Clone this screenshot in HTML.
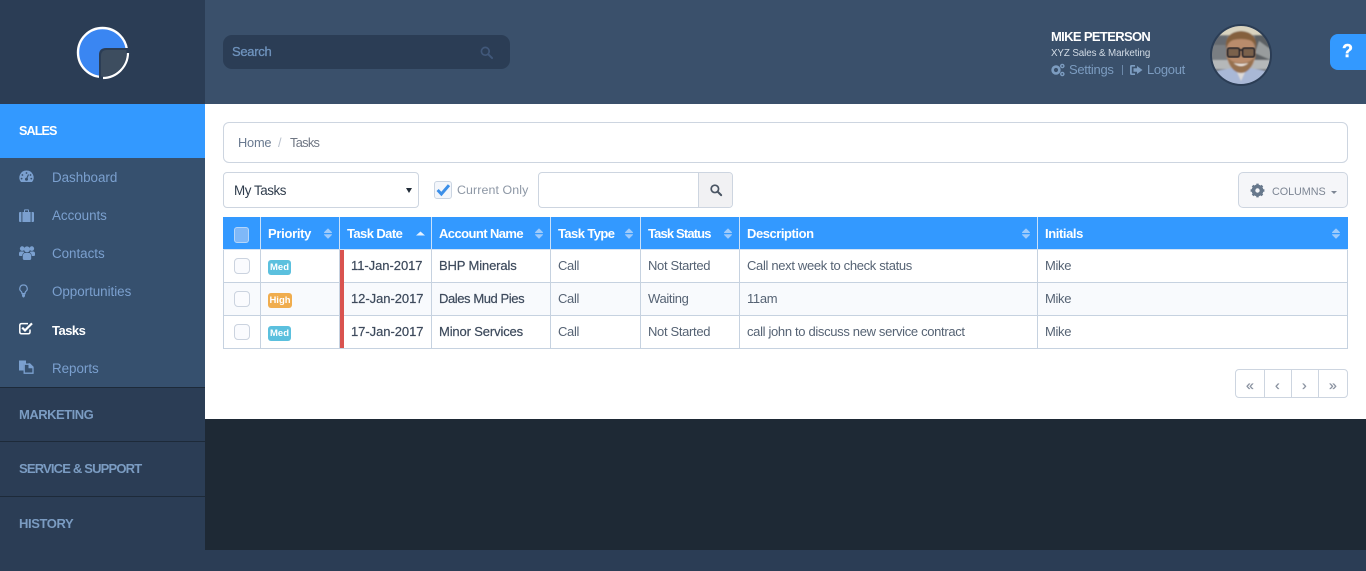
<!DOCTYPE html>
<html lang="en"><head><meta charset="utf-8"><title>Tasks</title>
<style>
*{box-sizing:border-box}
html,body{margin:0;padding:0;width:1366px;height:571px;overflow:hidden;background:#2b3d55;font-family:"Liberation Sans",sans-serif;font-size:13px;color:#4b5a6b}
.a{position:absolute}
.t{position:absolute;white-space:nowrap;line-height:16px;height:16px}
svg{position:absolute;overflow:visible}
.nav{color:#7ba0cf;font-size:13.4px;left:52px;letter-spacing:-.03px}
.sec{color:#7b9cc2;font-weight:bold;font-size:13px;left:19px;letter-spacing:-.5px}
.line{position:absolute;left:0;width:205px;height:1px;background:#1d2a39}
.th{color:#fff;font-weight:bold;font-size:13px;top:226px;letter-spacing:-.58px}
.td{font-size:13px;color:#566374;letter-spacing:-.33px}
.st{color:#3d4a5c;font-size:13px;letter-spacing:-.14px;-webkit-text-stroke:.2px #3d4a5c}
.v{position:absolute;width:1px;background:#c6d2e0;top:249px;height:99px}
.vh{position:absolute;width:1px;background:#c9e1fb;top:217px;height:32px}
.h{position:absolute;height:1px;background:#c6d2e0;left:223px;width:1125px}
.cb{position:absolute;left:234px;width:16px;height:16px;border:1px solid #cbd3df;border-radius:4px;background:#fafbfe}
.bd{position:absolute;left:268px;height:15px;border-radius:3px;color:#fff;font-size:9.5px;font-weight:bold;line-height:15px;text-align:center}
.pg{color:#8a92a0;font-size:14px;top:377px;-webkit-text-stroke:.3px #8a92a0}
</style></head><body>

<div class="a" style="left:205px;top:0;width:1161px;height:104px;background:#3a506b"></div>
<div class="a" style="left:0;top:0;width:205px;height:104px;background:#2b3d55"></div>
<svg style="left:0;top:0" width="205" height="104">
 <circle cx="102.500" cy="52.500" r="24.500" fill="#3a86f2" stroke="#fff" stroke-width="2.400"/>
 <clipPath id="lc"><circle cx="102.500" cy="52.500" r="24"/></clipPath>
 <path d="M99 79V55q0-7 7-7h24v31z" fill="#2b3d55"/>
 <path d="M101 78V56q0-6 6-6h22v28z" fill="#3d4d5f" clip-path="url(#lc)"/>
 <path d="M128 53A25.500 25.500 0 0 1 103 78" fill="none" stroke="#fff" stroke-width="2.200"/>
</svg>

<div class="a" style="left:223px;top:35px;width:287px;height:34px;border-radius:9px;background:#2b3d55"></div>
<div class="t" style="left:232px;top:44px;color:#6f93bd;font-size:13px;letter-spacing:-.3px;-webkit-text-stroke:.3px #6f93bd">Search</div>
<svg style="left:480px;top:46px" width="13" height="13" viewBox="0 0 14 14"><circle cx="5.700" cy="5.700" r="4.200" fill="none" stroke="#41587a" stroke-width="1.800"/><path d="M8.800 8.800L13 13" stroke="#41587a" stroke-width="2.100" stroke-linecap="round"/></svg>

<div class="t" style="left:1051px;top:29px;color:#fff;font-weight:bold;font-size:13px;letter-spacing:-.65px">MIKE PETERSON</div>
<div class="t" style="left:1051px;top:46px;color:#d3dce6;font-size:9.800px;letter-spacing:-.1px">XYZ Sales &amp; Marketing</div>
<svg style="left:1051px;top:63px" width="14" height="14" viewBox="0 0 14 14"><circle cx="5" cy="7" r="3.400" fill="none" stroke="#7c9cc0" stroke-width="2.600"/><circle cx="11.300" cy="3" r="1.600" fill="none" stroke="#7c9cc0" stroke-width="1.400"/><circle cx="11.300" cy="11" r="1.600" fill="none" stroke="#7c9cc0" stroke-width="1.400"/></svg>
<div class="t" style="left:1069px;top:62px;color:#7c9cc0;font-size:13px;letter-spacing:-.3px">Settings</div>
<div class="a" style="left:1122px;top:65px;width:1px;height:10px;background:#6b88a9"></div>
<svg style="left:1130px;top:64px" width="13" height="12" viewBox="0 0 13 12" fill="#7c9cc0"><path d="M0 2.500Q0 1 1.500 1H5V2.600H1.800V9.400H5V11H1.500Q0 11 0 9.500z"/><path d="M7 2L12.500 6 7 10V7.700H3.500V4.300H7z"/></svg>
<div class="t" style="left:1147px;top:62px;color:#7c9cc0;font-size:13px;letter-spacing:-.3px">Logout</div>

<svg style="left:1209px;top:23px" width="64" height="64" viewBox="0 0 64 64">
 <defs><clipPath id="av"><circle cx="32" cy="32" r="29"/></clipPath><filter id="bl"><feGaussianBlur stdDeviation=".9"/></filter><filter id="bl2"><feGaussianBlur stdDeviation=".4"/></filter></defs>
 <circle cx="32" cy="32" r="31" fill="#2b3d55"/>
 <g clip-path="url(#av)"><g filter="url(#bl)">
  <rect width="64" height="64" fill="#7a7e82"/>
  <rect width="64" height="12" fill="#d9d3bf"/>
  <rect x="46" y="12" width="18" height="25" fill="#5b6064"/>
  <rect x="0" y="13" width="18" height="9" fill="#666b6f"/>
  <rect x="0" y="37" width="64" height="9" fill="#b5b8b9"/>
  <path d="M46 30L64 38V28L50 18z" fill="#989c9d"/>
  <path d="M2 64V50Q14 46 24 45H40Q50 46 62 50V64z" fill="#a9b8d6"/>
  <path d="M27 47L32 58 37 47z" fill="#dcd9d8"/>
  <ellipse cx="32" cy="30" rx="14.500" ry="19.500" fill="#b98c6c"/>
  <path d="M17 26Q15 9 32 8 49 9 47 26 45 18 40 17 32 15 24 17 19 19 17 26z" fill="#84613e"/>
  <path d="M18 33Q22 50 32 50 42 50 46 33 42 40 32 40 22 40 18 33z" fill="#96714f"/>
  <path d="M24.500 40Q32 46 39.500 40 32 42 24.500 40z" fill="#f3ece6"/>
 </g>
  <g fill="#2f2a28" fill-opacity=".45" stroke="#232327" stroke-width="1.500" filter="url(#bl2)"><rect x="18.500" y="25" width="12" height="9" rx="2"/><rect x="33.500" y="25" width="12" height="9" rx="2"/><path d="M30.500 27h3"/></g>
 </g>
</svg>

<div class="a" style="left:1330px;top:34px;width:36px;height:36px;background:#3399ff;border-radius:8px 0 0 8px"></div>
<div class="t" style="left:1342px;top:41px;color:#fff;font-weight:bold;font-size:18px;line-height:20px;height:20px;-webkit-text-stroke:.4px #fff">?</div>

<!-- sidebar -->
<div class="a" style="left:0;top:104px;width:205px;height:54px;background:#3399ff"></div>
<div class="t" style="left:19px;top:123px;color:#fff;font-weight:bold;font-size:12.600px;letter-spacing:-.9px">SALES</div>
<div class="a" style="left:0;top:158px;width:205px;height:229px;background:#36506e"></div>

<svg style="left:19px;top:170px" width="15" height="13" viewBox="0 0 15 13"><path d="M7.500 .5A7 7 0 0 0 2 12H13A7 7 0 0 0 7.500 .5z" fill="#7ba0cf"/><g fill="#36506e"><circle cx="7.500" cy="3" r=".9"/><circle cx="3.400" cy="5" r=".9"/><circle cx="2.600" cy="8.600" r=".9"/><circle cx="12.300" cy="8.600" r=".9"/><circle cx="11.500" cy="5" r=".9"/><circle cx="7.500" cy="9.200" r="1.500"/></g><path d="M7.500 9L9.500 4.500" stroke="#36506e" stroke-width="1.100"/></svg>
<div class="t nav" style="top:170px">Dashboard</div>

<svg style="left:19px;top:209px" width="15" height="13" viewBox="0 0 15 13" fill="#7ba0cf"><path d="M5 3V1.200Q5 .4 5.800 .4H9.200Q10 .4 10 1.200V3H9V1.400H6V3z"/><path d="M0 4Q0 3 1 3H2.400V13H1Q0 13 0 12zM3.400 3H11.600V13H3.400zM12.600 3H14Q15 3 15 4V12Q15 13 14 13H12.600z"/></svg>
<div class="t nav" style="top:208px">Accounts</div>

<svg style="left:19px;top:246px" width="16" height="14" viewBox="0 0 16 14" fill="#7ba0cf"><circle cx="3.200" cy="2.600" r="2.300"/><circle cx="12.800" cy="2.600" r="2.300"/><circle cx="8" cy="3.400" r="3"/><path d="M0 7.500Q0 5.500 2 5.500H4Q5 5.500 5.200 6.400 3.400 7.400 3.200 10H1Q0 10 0 9zM16 7.500Q16 5.500 14 5.500H12Q11 5.500 10.800 6.400 12.600 7.400 12.800 10H15Q16 10 16 9zM3.800 11Q3.800 7 6 7H10Q12.200 7 12.200 11V12.500Q12.200 14 10.600 14H5.400Q3.800 14 3.800 12.500z"/></svg>
<div class="t nav" style="top:246px">Contacts</div>

<svg style="left:19px;top:284px" width="9" height="14" viewBox="0 0 9 14"><path d="M4.500 1A3.600 3.600 0 0 0 2.400 7.600Q3 8.400 3 9.600H6Q6 8.400 6.600 7.600A3.600 3.600 0 0 0 4.500 1z" fill="none" stroke="#7ba0cf" stroke-width="1.200"/><path d="M3 10.300H6V12Q5.400 13.600 4.500 13.600 3.600 13.600 3 12z" fill="#7ba0cf"/></svg>
<div class="t nav" style="top:284px">Opportunities</div>

<svg style="left:19px;top:322px" width="14" height="13" viewBox="0 0 14 13"><path d="M11 7.500V10Q11 11.800 9.200 11.800H2.600Q.8 11.800 .8 10V3.400Q.8 1.600 2.600 1.600H9" fill="none" stroke="#fff" stroke-width="1.500"/><path d="M3.200 5.600L6 8.400 13 1.400" fill="none" stroke="#fff" stroke-width="2.200"/></svg>
<div class="t nav" style="top:323px;color:#fff;font-weight:bold;letter-spacing:-.5px;font-size:13px">Tasks</div>

<svg style="left:19px;top:360px" width="15" height="14" viewBox="0 0 15 14"><path d="M0 .5H7V3.500H4.500V10.500H0z" fill="#7ba0cf"/><path d="M5.200 4.200H10L14 8V13.200H5.200z" fill="#36506e" stroke="#7ba0cf" stroke-width="1.300"/><path d="M9.500 3.200H11L14.600 6.800V8.300H9.500z" fill="#7ba0cf"/></svg>
<div class="t nav" style="top:361px">Reports</div>

<div class="line" style="top:387px"></div>
<div class="t sec" style="top:407px">MARKETING</div>
<div class="line" style="top:441px"></div>
<div class="t sec" style="top:461px;letter-spacing:-.82px">SERVICE &amp; SUPPORT</div>
<div class="line" style="top:496px"></div>
<div class="t sec" style="top:516px;letter-spacing:-.4px">HISTORY</div>

<!-- content -->
<div class="a" style="left:205px;top:104px;width:1161px;height:315px;background:#fff"></div>
<div class="a" style="left:205px;top:419px;width:1161px;height:131px;background:#1e2935"></div>

<div class="a" style="left:223px;top:122px;width:1125px;height:41px;border:1px solid #cdd5e0;border-radius:6px;background:#fff"></div>
<div class="t" style="left:238px;top:135px;color:#6a7a90;font-size:12.800px;letter-spacing:-.2px">Home</div>
<div class="t" style="left:278px;top:135px;color:#b8c0cc;font-size:12.800px">/</div>
<div class="t" style="left:290px;top:135px;color:#6f7683;font-size:12.800px;letter-spacing:-.7px">Tasks</div>

<div class="a" style="left:223px;top:172px;width:196px;height:36px;border:1px solid #cdd5e0;border-radius:4px;background:#fff"></div>
<div class="t" style="left:234px;top:183px;color:#2f3c4c;font-size:13.400px;letter-spacing:-.45px">My Tasks</div>
<svg style="left:406px;top:188px" width="6" height="5"><path d="M0 0H6L3 5z" fill="#222c38"/></svg>

<div class="a" style="left:434px;top:181px;width:18px;height:18px;border:1px solid #cbd5e2;border-radius:3px;background:#f3f6fb"></div>
<svg style="left:436px;top:183px" width="15" height="14" viewBox="0 0 15 14"><path d="M1.600 7L5.400 11 13 2.200" fill="none" stroke="#3c8fe8" stroke-width="3"/></svg>
<div class="t" style="left:457px;top:182px;color:#8d97a5;font-size:12.400px;letter-spacing:.1px">Current Only</div>

<div class="a" style="left:538px;top:172px;width:195px;height:36px;border:1px solid #cdd5e0;border-radius:4px;background:#fff;overflow:hidden"><div class="a" style="left:159px;top:0;width:35px;height:34px;background:#f1f1f3;border-left:1px solid #cdd5e0"></div></div>
<svg style="left:710px;top:184px" width="12" height="12" viewBox="0 0 14 14"><circle cx="5.700" cy="5.700" r="4.300" fill="none" stroke="#4a5563" stroke-width="2"/><path d="M8.900 8.900L13 13" stroke="#4a5563" stroke-width="2.400" stroke-linecap="round"/></svg>

<div class="a" style="left:1238px;top:172px;width:110px;height:36px;border:1px solid #cdd5e0;border-radius:5px;background:#f5f6f9"></div>
<svg style="left:1250px;top:183px" width="15" height="15" viewBox="0 0 15 15"><circle cx="7.500" cy="7.500" r="4.400" fill="none" stroke="#67788c" stroke-width="3"/><path d="M7.500 .6V14.400M.6 7.500H14.400M2.600 2.600L12.400 12.400M12.400 2.600L2.600 12.400" stroke="#67788c" stroke-width="2.400"/><circle cx="7.500" cy="7.500" r="2.200" fill="#f5f6f9"/></svg>
<div class="t" style="left:1272px;top:184px;color:#7d8694;font-size:10.800px;letter-spacing:-.05px">COLUMNS</div>
<svg style="left:1331px;top:191px" width="6" height="3"><path d="M0 0H6L3 3z" fill="#7d8694"/></svg>

<!-- table -->
<div class="a" style="left:223px;top:217px;width:1125px;height:32px;background:#3399ff"></div>
<div class="a" style="left:223px;top:282px;width:1125px;height:33px;background:#f8fafd"></div>
<div class="a" style="left:223px;top:249px;width:1px;height:99px;background:#c6d2e0"></div>
<div class="a" style="left:1347px;top:249px;width:1px;height:99px;background:#c6d2e0"></div>
<div class="h" style="top:249px;background:#d5e4f5"></div>
<div class="h" style="top:282px"></div>
<div class="h" style="top:315px"></div>
<div class="h" style="top:348px"></div>

<div class="vh" style="left:260px"></div><div class="vh" style="left:339px"></div><div class="vh" style="left:431px"></div><div class="vh" style="left:550px"></div><div class="vh" style="left:640px"></div><div class="vh" style="left:739px"></div><div class="vh" style="left:1037px"></div>
<div class="v" style="left:260px"></div><div class="v" style="left:339px"></div><div class="v" style="left:431px"></div><div class="v" style="left:550px"></div><div class="v" style="left:640px"></div><div class="v" style="left:739px"></div><div class="v" style="left:1037px"></div>
<div class="a" style="left:340px;top:250px;width:4px;height:98px;background:#d9534f"></div>

<div class="a" style="left:234px;top:227px;width:15px;height:16px;border:1px solid #b5d6fa;border-radius:3px;background:#7fb8f8"></div>
<div class="t th" style="left:268px;letter-spacing:-.3px">Priority</div>
<div class="t th" style="left:347px">Task Date</div>
<div class="t th" style="left:439px">Account Name</div>
<div class="t th" style="left:558px">Task Type</div>
<div class="t th" style="left:648px;letter-spacing:-.85px">Task Status</div>
<div class="t th" style="left:747px;letter-spacing:-.45px">Description</div>
<div class="t th" style="left:1045px;letter-spacing:-.4px">Initials</div>

<svg style="left:0;top:0;pointer-events:none" width="1366" height="300">
 <g fill="#9ecbfb" stroke="#9ecbfb" stroke-width="1" stroke-linejoin="round">
  <path d="M324.500 232.500l3.500-3.500 3.500 3.500zM324.500 234.700h7l-3.500 3.500z"/>
  <path d="M535.500 232.500l3.500-3.500 3.500 3.500zM535.500 234.700h7l-3.500 3.500z"/>
  <path d="M625.500 232.500l3.500-3.500 3.500 3.500zM625.500 234.700h7l-3.500 3.500z"/>
  <path d="M724.500 232.500l3.500-3.500 3.500 3.500zM724.500 234.700h7l-3.500 3.500z"/>
  <path d="M1022.500 232.500l3.500-3.500 3.500 3.500zM1022.500 234.700h7l-3.500 3.500z"/>
  <path d="M1332.500 232.500l3.500-3.500 3.500 3.500zM1332.500 234.700h7l-3.500 3.500z"/>
 </g>
 <path d="M416 235.500l4.500-4 4.500 4z" fill="#e6f2ff"/>
</svg>

<div class="cb" style="top:258px"></div>
<div class="cb" style="top:291px"></div>
<div class="cb" style="top:324px"></div>

<div class="bd" style="top:260px;width:23px;background:#5bc0de">Med</div>
<div class="bd" style="top:293px;width:24px;background:#f0ad4e">High</div>
<div class="bd" style="top:326px;width:23px;background:#5bc0de">Med</div>

<div class="t st" style="left:351px;top:258px;letter-spacing:-.05px">11-Jan-2017</div>
<div class="t st" style="left:439px;top:258px">BHP Minerals</div>
<div class="t td" style="left:558px;top:258px">Call</div>
<div class="t td" style="left:648px;top:258px">Not Started</div>
<div class="t td" style="left:747px;top:258px">Call next week to check status</div>
<div class="t td" style="left:1045px;top:258px">Mike</div>

<div class="t st" style="left:351px;top:291px;letter-spacing:-.05px">12-Jan-2017</div>
<div class="t st" style="left:439px;top:291px;letter-spacing:-.42px">Dales Mud Pies</div>
<div class="t td" style="left:558px;top:291px">Call</div>
<div class="t td" style="left:648px;top:291px">Waiting</div>
<div class="t td" style="left:747px;top:291px">11am</div>
<div class="t td" style="left:1045px;top:291px">Mike</div>

<div class="t st" style="left:351px;top:324px;letter-spacing:-.05px">17-Jan-2017</div>
<div class="t st" style="left:439px;top:324px">Minor Services</div>
<div class="t td" style="left:558px;top:324px">Call</div>
<div class="t td" style="left:648px;top:324px">Not Started</div>
<div class="t td" style="left:747px;top:324px">call john to discuss new service contract</div>
<div class="t td" style="left:1045px;top:324px">Mike</div>

<!-- pagination -->
<div class="a" style="left:1235px;top:369px;width:113px;height:29px;border:1px solid #cdd5e0;border-radius:4px;background:#fff"></div>
<div class="a" style="left:1264px;top:369px;width:1px;height:29px;background:#cdd5e0"></div>
<div class="a" style="left:1291px;top:369px;width:1px;height:29px;background:#cdd5e0"></div>
<div class="a" style="left:1318px;top:369px;width:1px;height:29px;background:#cdd5e0"></div>
<div class="t pg" style="left:1246px">«</div>
<div class="t pg" style="left:1275px">‹</div>
<div class="t pg" style="left:1302px">›</div>
<div class="t pg" style="left:1329px">»</div>

</body></html>
